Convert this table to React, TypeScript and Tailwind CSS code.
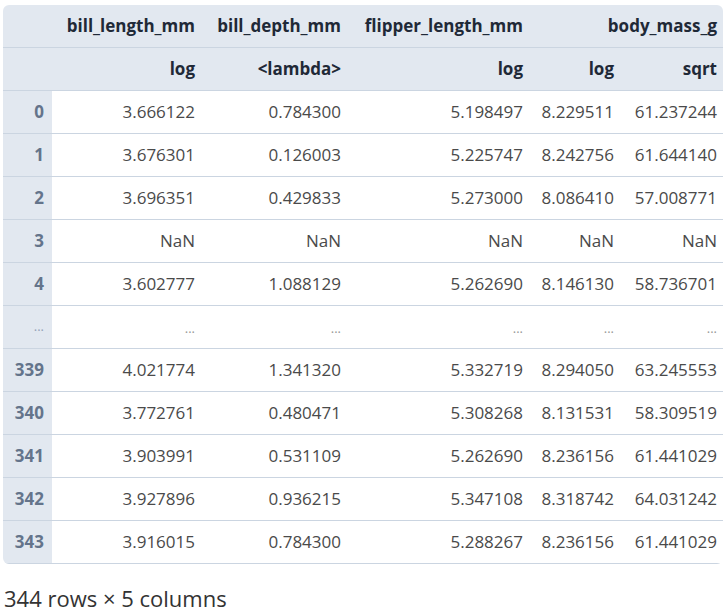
const rows: [string, string, string, string, string, string][] = [
  ['0', '3.666122', '0.784300', '5.198497', '8.229511', '61.237244'],
  ['1', '3.676301', '0.126003', '5.225747', '8.242756', '61.644140'],
  ['2', '3.696351', '0.429833', '5.273000', '8.086410', '57.008771'],
  ['3', 'NaN', 'NaN', 'NaN', 'NaN', 'NaN'],
  ['4', '3.602777', '1.088129', '5.262690', '8.146130', '58.736701'],
  ['...', '...', '...', '...', '...', '...'],
  ['339', '4.021774', '1.341320', '5.332719', '8.294050', '63.245553'],
  ['340', '3.772761', '0.480471', '5.308268', '8.131531', '58.309519'],
  ['341', '3.903991', '0.531109', '5.262690', '8.236156', '61.441029'],
  ['342', '3.927896', '0.936215', '5.347108', '8.318742', '64.031242'],
  ['343', '3.916015', '0.784300', '5.288267', '8.236156', '61.441029'],
];

export default function App() {
  return (
    <div className="w-[725px] h-[613px] bg-white overflow-hidden" style={{ fontFamily: '"Open Sans", "Noto Sans", sans-serif' }}>
      <div className="ml-[3px] mt-[5px] w-[720px] rounded-md overflow-hidden">
        <table className="w-full table-fixed border-collapse text-[17px]">
          <colgroup>
            <col className="w-[49px]" />
            <col className="w-[151px]" />
            <col className="w-[146px]" />
            <col className="w-[182px]" />
            <col className="w-[91px]" />
            <col className="w-[101px]" />
          </colgroup>
          <thead className="bg-[#e2e8f0] text-[#1f2937] font-bold">
            <tr className="h-[42px] border-b border-[#cbd5e1]">
              <th />
              <th className="text-right pr-2 whitespace-nowrap">bill_length_mm</th>
              <th className="text-right pr-2 whitespace-nowrap">bill_depth_mm</th>
              <th className="text-right pr-2 whitespace-nowrap">flipper_length_mm</th>
              <th colSpan={2} className="text-right pr-[6px] whitespace-nowrap">body_mass_g</th>
            </tr>
            <tr className="h-[43px] border-b border-[#cbd5e1]">
              <th />
              <th className="text-right pr-2">log</th>
              <th className="text-right pr-2">&lt;lambda&gt;</th>
              <th className="text-right pr-2">log</th>
              <th className="text-right pr-2">log</th>
              <th className="text-right pr-[6px]">sqrt</th>
            </tr>
          </thead>
          <tbody className="text-[#4a4a4a]">
            {rows.map((r) => (
              <tr key={r[0]} className="h-[43px] border-b border-[#cbd5e1]">
                <th className={r[0] === '...' ? 'bg-[#e2e8f0] text-right pr-2 font-normal text-[#94a3b8] text-[13px]' : 'bg-[#e2e8f0] text-right pr-2 font-bold text-[#64748b]'}>
                  {r[0]}
                </th>
                {r.slice(1).map((v, i) => (
                  <td key={i} className={i === 4 ? 'text-right pr-[6px]' : 'text-right pr-2'}>
                    {v === '...' ? <span className="text-[#999] text-[13px]">...</span> : v}
                  </td>
                ))}
              </tr>
            ))}
          </tbody>
        </table>
      </div>
      <div className="ml-[4px] mt-[22px] text-[22px] leading-[24px] text-[#333]">344 rows × 5 columns</div>
    </div>
  );
}
